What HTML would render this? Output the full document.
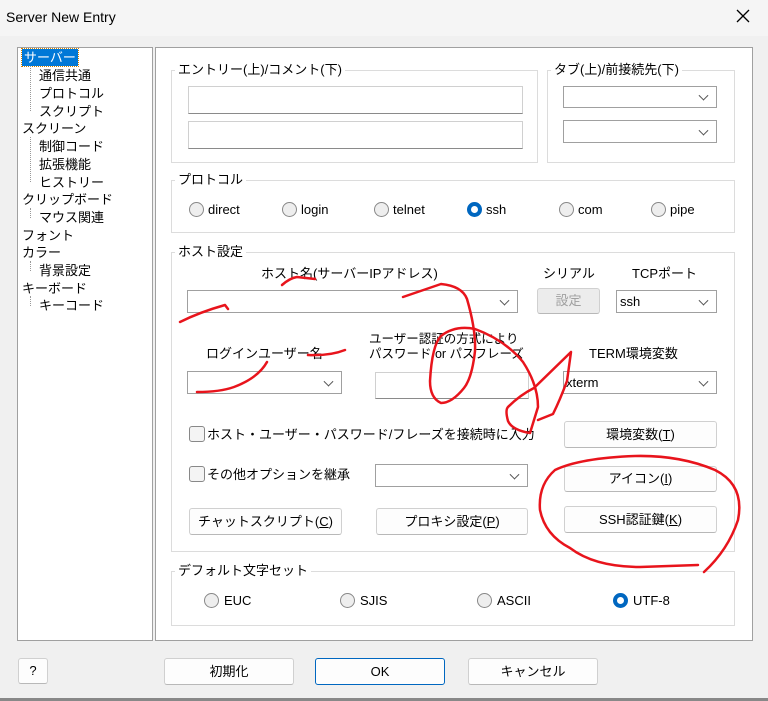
<!DOCTYPE html>
<html><head><meta charset="utf-8"><style>
*{box-sizing:border-box;margin:0;padding:0}
body{width:768px;height:701px;background:#f0f0f0;font-family:"Liberation Sans","Noto Sans CJK JP",sans-serif;font-size:13px;color:#000;position:relative;overflow:hidden}
.a{position:absolute}
.title{left:0;top:0;width:768px;height:36px;background:#f5f5f5}
.panel{background:#fff;border:1px solid #a0a0a0}
.grp{border:1px solid #dcdcdc}
.gl{background:#fff;padding:0 3px;font-size:13px;line-height:16px}
.inp{background:#fff;border:1px solid #d0d0d0;border-bottom-color:#8a8a8a}
.cb{background:#fff;border:1px solid #a0a0a0}
.cb::after{content:"";position:absolute;right:9px;top:50%;width:6px;height:6px;border-right:1px solid #555;border-bottom:1px solid #555;transform:translateY(-70%) rotate(45deg)}
.btn{background:#fdfdfd;border:1px solid #d0d0d0;border-bottom-color:#b8b8b8;border-radius:3px;text-align:center;font-size:13px}
.rb{width:15px;height:15px;border-radius:50%;border:1px solid #888;background:#eee}
.rs{width:15px;height:15px;border-radius:50%;background:#0067c0}
.rs::after{content:"";position:absolute;left:4px;top:4px;width:7px;height:7px;border-radius:50%;background:#fff}
.chk{width:16px;height:16px;border:1px solid #888;border-radius:3px;background:#f4f4f4}
.t{white-space:nowrap;line-height:16px}
.tree div{position:absolute;white-space:nowrap;font-size:13px;line-height:17px}
</style></head><body>
<div class="a title"></div>
<div class="a t" style="left:6px;top:9px;font-size:14px">Server New Entry</div>
<svg class="a" style="left:736px;top:9px" width="14" height="14" stroke="#000" stroke-width="1.3"><path d="M1 1L13 13M13 1L1 13"/></svg>

<div class="a panel" style="left:17px;top:47px;width:136px;height:594px"></div>
<div class="a tree" style="left:0;top:0">
<div style="left:22px;top:49px;background:#0078d7;color:#fff;padding:0 2px;outline:1px dotted #d08000">サーバー</div>
<div style="left:39px;top:67px">通信共通</div>
<div style="left:39px;top:85px">プロトコル</div>
<div style="left:39px;top:103px">スクリプト</div>
<div style="left:22px;top:120px">スクリーン</div>
<div style="left:39px;top:138px">制御コード</div>
<div style="left:39px;top:156px">拡張機能</div>
<div style="left:39px;top:174px">ヒストリー</div>
<div style="left:22px;top:191px">クリップボード</div>
<div style="left:39px;top:209px">マウス関連</div>
<div style="left:22px;top:227px">フォント</div>
<div style="left:22px;top:244px">カラー</div>
<div style="left:39px;top:262px">背景設定</div>
<div style="left:22px;top:280px">キーボード</div>
<div style="left:39px;top:297px">キーコード</div>
</div>
<div class="a" style="left:30px;top:66px;width:1px;height:45px;border-left:1px dotted #999"></div>
<div class="a" style="left:30px;top:137px;width:1px;height:45px;border-left:1px dotted #999"></div>
<div class="a" style="left:30px;top:208px;width:1px;height:10px;border-left:1px dotted #999"></div>
<div class="a" style="left:30px;top:261px;width:1px;height:10px;border-left:1px dotted #999"></div>
<div class="a" style="left:30px;top:296px;width:1px;height:10px;border-left:1px dotted #999"></div>

<div class="a panel" style="left:155px;top:47px;width:598px;height:594px"></div>

<div class="a grp" style="left:171px;top:70px;width:367px;height:93px"></div>
<div class="a gl" style="left:175px;top:62px">エントリー(上)/コメント(下)</div>
<div class="a inp" style="left:188px;top:86px;width:335px;height:28px"></div>
<div class="a inp" style="left:188px;top:121px;width:335px;height:28px"></div>
<div class="a grp" style="left:547px;top:70px;width:188px;height:93px"></div>
<div class="a gl" style="left:551px;top:62px">タブ(上)/前接続先(下)</div>
<div class="a cb" style="left:563px;top:86px;width:154px;height:22px"></div>
<div class="a cb" style="left:563px;top:120px;width:154px;height:23px"></div>

<div class="a grp" style="left:171px;top:180px;width:564px;height:53px"></div>
<div class="a gl" style="left:175px;top:172px">プロトコル</div>
<div class="a rb" style="left:189px;top:202px"></div><div class="a t" style="left:208px;top:202px">direct</div>
<div class="a rb" style="left:282px;top:202px"></div><div class="a t" style="left:301px;top:202px">login</div>
<div class="a rb" style="left:374px;top:202px"></div><div class="a t" style="left:393px;top:202px">telnet</div>
<div class="a rs" style="left:467px;top:202px"></div><div class="a t" style="left:486px;top:202px">ssh</div>
<div class="a rb" style="left:559px;top:202px"></div><div class="a t" style="left:578px;top:202px">com</div>
<div class="a rb" style="left:651px;top:202px"></div><div class="a t" style="left:670px;top:202px">pipe</div>

<div class="a grp" style="left:171px;top:252px;width:564px;height:300px"></div>
<div class="a gl" style="left:175px;top:244px">ホスト設定</div>
<div class="a t" style="left:261px;top:266px">ホスト名(サーバーIPアドレス)</div>
<div class="a t" style="left:543px;top:266px">シリアル</div>
<div class="a t" style="left:632px;top:266px">TCPポート</div>
<div class="a cb" style="left:187px;top:290px;width:331px;height:23px"></div>
<div class="a btn" style="left:537px;top:288px;width:63px;height:26px;line-height:24px;color:#a0a0a0;background:#ececec">設定</div>
<div class="a cb" style="left:616px;top:290px;width:101px;height:23px"><span class="a t" style="left:3px;top:3px">ssh</span></div>
<div class="a t" style="left:369px;top:332px;font-size:12.5px;line-height:15px">ユーザー認証の方式により<br>パスワード or パスフレーズ</div>
<div class="a t" style="left:206px;top:346px">ログインユーザー名</div>
<div class="a t" style="left:589px;top:346px">TERM環境変数</div>
<div class="a cb" style="left:187px;top:371px;width:155px;height:23px"></div>
<div class="a inp" style="left:375px;top:372px;width:154px;height:27px"></div>
<div class="a cb" style="left:563px;top:371px;width:154px;height:23px"><span class="a t" style="left:2px;top:3px">xterm</span></div>
<div class="a chk" style="left:189px;top:426px"></div>
<div class="a t" style="left:207px;top:427px">ホスト・ユーザー・パスワード/フレーズを接続時に入力</div>
<div class="a btn" style="left:564px;top:421px;width:153px;height:27px;line-height:25px">環境変数(<u>T</u>)</div>
<div class="a chk" style="left:189px;top:466px"></div>
<div class="a t" style="left:207px;top:467px">その他オプションを継承</div>
<div class="a cb" style="left:375px;top:464px;width:153px;height:23px"></div>
<div class="a btn" style="left:564px;top:466px;width:153px;height:26px;line-height:24px">アイコン(<u>I</u>)</div>
<div class="a btn" style="left:189px;top:508px;width:153px;height:27px;line-height:25px">チャットスクリプト(<u>C</u>)</div>
<div class="a btn" style="left:376px;top:508px;width:152px;height:27px;line-height:25px">プロキシ設定(<u>P</u>)</div>
<div class="a btn" style="left:564px;top:506px;width:153px;height:27px;line-height:25px">SSH認証鍵(<u>K</u>)</div>

<div class="a grp" style="left:171px;top:571px;width:564px;height:55px"></div>
<div class="a gl" style="left:175px;top:563px">デフォルト文字セット</div>
<div class="a rb" style="left:204px;top:593px"></div><div class="a t" style="left:224px;top:593px">EUC</div>
<div class="a rb" style="left:340px;top:593px"></div><div class="a t" style="left:360px;top:593px">SJIS</div>
<div class="a rb" style="left:477px;top:593px"></div><div class="a t" style="left:497px;top:593px">ASCII</div>
<div class="a rs" style="left:613px;top:593px"></div><div class="a t" style="left:633px;top:593px">UTF-8</div>

<div class="a btn" style="left:18px;top:658px;width:30px;height:26px;line-height:24px">?</div>
<div class="a btn" style="left:164px;top:658px;width:130px;height:27px;line-height:25px">初期化</div>
<div class="a btn" style="left:315px;top:658px;width:130px;height:27px;line-height:25px;border:1px solid #0067c0">OK</div>
<div class="a btn" style="left:468px;top:658px;width:130px;height:27px;line-height:25px">キャンセル</div>
<div class="a" style="left:0;top:698px;width:768px;height:3px;background:#888"></div>

<svg class="a" style="left:0;top:0" width="768" height="701" fill="none" stroke="#e8141c" stroke-width="2.5" stroke-linecap="round" stroke-linejoin="round">
<path d="M180 322 Q200 312 225 305 L228 309"/>
<path d="M282 285 Q290 278 297 277 L315 279"/>
<path d="M403 297 L441 284 Q462 286 467 299 Q476 330 475 351 Q472 378 464 388 Q452 403 441 403 Q430 398 430 381 Q432 345 441 336 Q455 325 475 329 Q505 340 523 362 Q538 385 538 407 L530 433 Q512 430 508 421 Q505 410 508 407 Q520 395 534 388 L571 352 L567 381 Q560 400 553 414 L538 420"/>
<path d="M197 392 Q220 392 234 387 Q258 378 267 362"/>
<path d="M308 355 Q330 356 345 350"/>
<path d="M704 572 Q728 550 738 520 Q745 485 715 470 Q680 455 635 456 Q580 458 555 470 Q538 485 540 510 Q545 535 570 548 Q595 567 640 567 L698 565"/>
</svg>
</body></html>
